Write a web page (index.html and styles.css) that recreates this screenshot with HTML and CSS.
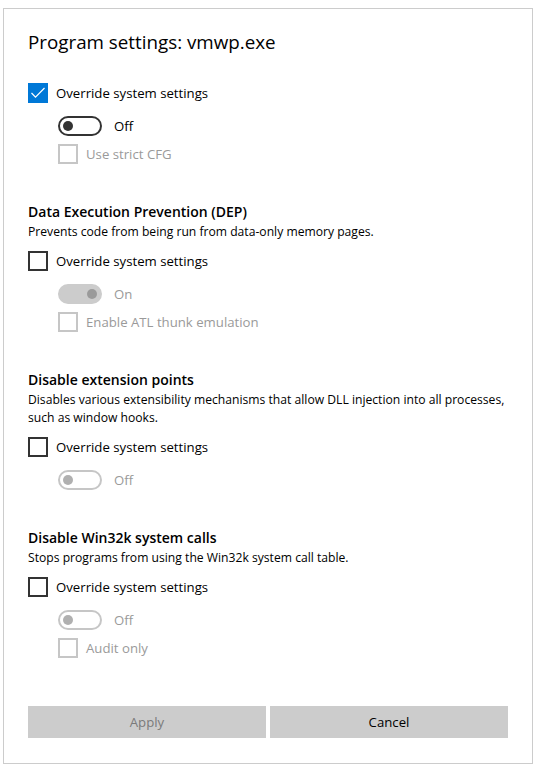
FILE: index.html
```html
<!DOCTYPE html>
<html>
<head>
<meta charset="utf-8">
<link rel="stylesheet" href="styles.css">
</head>
<body>
<div class="dialog">
  <h1 class="title">Program settings: vmwp.exe</h1>

  <section class="group first">
    <div class="check checked"><span class="box"><svg viewBox="0 0 20 20" width="20" height="20"><polyline points="3.5,10 7.5,14.2 16.5,5" fill="none" stroke="#fff" stroke-width="1.2"/></svg></span><span class="label">Override system settings</span></div>
    <div class="sub">
      <div class="toggle-row"><span class="toggle"><span class="knob"></span></span><span class="label">Off</span></div>
      <div class="check disabled tight"><span class="box"></span><span class="label">Use strict CFG</span></div>
    </div>
  </section>

  <section class="group">
    <h2 class="heading">Data Execution Prevention (DEP)</h2>
    <p class="desc">Prevents code from being run from data-only memory pages.</p>
    <div class="check"><span class="box"></span><span class="label">Override system settings</span></div>
    <div class="sub">
      <div class="toggle-row disabled"><span class="toggle on"><span class="knob"></span></span><span class="label">On</span></div>
      <div class="check disabled tight"><span class="box"></span><span class="label">Enable ATL thunk emulation</span></div>
    </div>
  </section>

  <section class="group">
    <h2 class="heading">Disable extension points</h2>
    <p class="desc">Disables various extensibility mechanisms that allow DLL injection into all processes, such as window hooks.</p>
    <div class="check"><span class="box"></span><span class="label">Override system settings</span></div>
    <div class="sub">
      <div class="toggle-row disabled"><span class="toggle"><span class="knob"></span></span><span class="label">Off</span></div>
    </div>
  </section>

  <section class="group">
    <h2 class="heading">Disable Win32k system calls</h2>
    <p class="desc">Stops programs from using the Win32k system call table.</p>
    <div class="check"><span class="box"></span><span class="label">Override system settings</span></div>
    <div class="sub">
      <div class="toggle-row disabled"><span class="toggle"><span class="knob"></span></span><span class="label">Off</span></div>
      <div class="check disabled tight"><span class="box"></span><span class="label">Audit only</span></div>
    </div>
  </section>

  <div class="buttons">
    <button class="btn" disabled>Apply</button>
    <button class="btn">Cancel</button>
  </div>
</div>
</body>
</html>
```

FILE: styles.css
```css
html, body {
  margin: 0;
  padding: 0;
  background: #fff;
}

body {
  font-family: "Open Sans", "Noto Sans", sans-serif;
  color: #000;
}

.dialog {
  margin: 8px 0 0 3px;
  width: 530px;
  height: 756px;
  box-sizing: border-box;
  border: 1px solid #cccccc;
  padding: 19px 24px 0 24px;
  display: flex;
  flex-direction: column;
}

.title {
  margin: 0;
  font-size: 18.8px;
  font-weight: 400;
  line-height: 28px;
  height: 28px;
}

.group {
  display: flex;
  flex-direction: column;
  margin-top: 38px;
}

.group.first {
  margin-top: 27px;
}

.heading {
  margin: 0;
  font-size: 14px;
  font-weight: 600;
  line-height: 20px;
}

.desc {
  margin: 1px 0 10px 0;
  font-size: 12.15px;
  line-height: 18px;
}

.check {
  display: flex;
  align-items: center;
  height: 20px;
  font-size: 13.2px;
}

.check .box {
  width: 20px;
  height: 20px;
  box-sizing: border-box;
  border: 2px solid #333;
  display: flex;
  align-items: center;
  justify-content: center;
  flex: none;
}

.check.checked .box {
  border: none;
  background: #0078d7;
}

.check .label {
  margin-left: 8px;
  line-height: 20px;
}

.check.disabled .box {
  border-color: #c6c6c6;
}

.check.disabled .label {
  color: #9a9a9a;
}

.sub {
  display: flex;
  flex-direction: column;
  padding-left: 30px;
  margin-top: 13px;
}

.toggle-row {
  display: flex;
  align-items: center;
  height: 20px;
  font-size: 13.2px;
}

.toggle-row .label {
  margin-left: 12px;
  line-height: 20px;
}

.toggle-row.disabled .label {
  color: #9a9a9a;
}

.toggle {
  width: 44px;
  height: 20px;
  box-sizing: border-box;
  border: 2px solid #333;
  border-radius: 10px;
  display: flex;
  align-items: center;
  padding: 0 3px;
  flex: none;
}

.toggle .knob {
  width: 10px;
  height: 10px;
  border-radius: 50%;
  background: #333;
}

.toggle.on {
  justify-content: flex-end;
}

.toggle-row.disabled .toggle {
  border-color: #c6c6c6;
}

.toggle-row.disabled .toggle .knob {
  background: #b0b0b0;
}

.toggle-row.disabled .toggle.on {
  background: #cccccc;
  border-color: #cccccc;
}

.toggle-row.disabled .toggle.on .knob {
  background: #9a9a9a;
}

.check.tight {
  margin-top: 8px;
}

.buttons {
  margin-top: auto;
  margin-bottom: 25px;
  display: grid;
  grid-template-columns: 1fr 1fr;
  gap: 4px;
}

.btn {
  height: 32px;
  border: none;
  background: #cccccc;
  font-family: inherit;
  font-size: 13.2px;
  color: #000;
  padding: 0;
}

.btn:disabled {
  color: #7a7a7a;
}
```
